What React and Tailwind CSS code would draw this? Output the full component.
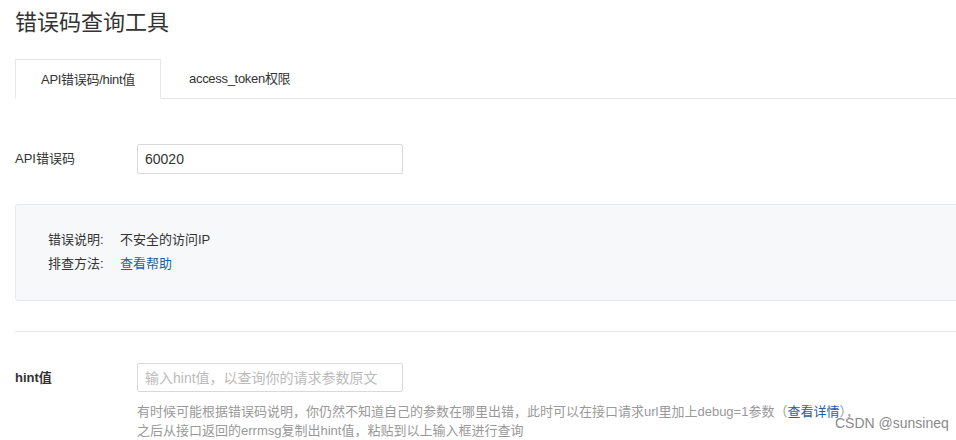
import React from 'react'

const font = { fontFamily: '"Liberation Sans", "Noto Sans CJK SC", sans-serif' }

function Row({ label, bold, children }) {
  return (
    <div className="flex items-start">
      <div className={`w-[122px] h-[30px] leading-[30px] text-[13px] text-[#333] ${bold ? 'font-semibold' : ''}`}>{label}</div>
      <div>{children}</div>
    </div>
  )
}

export default function App() {
  return (
    <div className="relative w-[956px] h-[440px] overflow-hidden bg-white" style={font}>
      <div className="w-[1000px] pl-[15px]">
        <h1 className="mt-2 text-[22px] leading-[30px] text-[#333]">错误码查询工具</h1>

        <div className="mt-[21px] flex border-b border-[#e5e5e5]">
          <div className="-mb-px w-[146px] h-10 text-center leading-[39px] text-[13px] tracking-[-0.3px] text-[#333] bg-white border border-[#e5e5e5] border-b-white">
            API错误码/hint值
          </div>
          <div className="h-[39px] px-7 leading-[39px] text-[13px] tracking-[-0.3px] text-[#333]">access_token权限</div>
        </div>

        <div className="mt-[45px]">
          <Row label="API错误码">
            <input
              defaultValue="60020"
              className="w-[266px] h-[30px] px-[7px] text-[14px] text-[#333] border border-[#d9d9d9] rounded-[2px] outline-none"
              style={font}
            />
          </Row>
        </div>

        <div className="mt-[30px] h-[97px] py-[23px] px-8 bg-[#f7f8fa] border border-[#e8e8e8] rounded-[3px] text-[13px] leading-6 text-[#333]">
          <div className="flex">
            <span className="w-[72px]">错误说明:</span>
            <span>不安全的访问IP</span>
          </div>
          <div className="flex">
            <span className="w-[72px]">排查方法:</span>
            <a className="text-[#1f5fa6]">查看帮助</a>
          </div>
        </div>

        <div className="mt-[30px] border-t border-[#e8e8e8]" />

        <div className="mt-[31px]">
          <Row label="hint值" bold>
            <input
              placeholder="输入hint值，以查询你的请求参数原文"
              className="w-[266px] h-[29px] px-[7px] text-[14px] text-[#333] placeholder:text-[#bbb] border border-[#d9d9d9] rounded-[2px] outline-none"
              style={font}
            />
            <p className="mt-[10px] text-[13px] leading-[19px] text-[#999] whitespace-nowrap">
              有时候可能根据错误码说明，你仍然不知道自己的参数在哪里出错，此时可以在接口请求url里加上debug=1参数（<a className="text-[#1f5fa6]">查看详情</a>），
              <br />
              之后从接口返回的errmsg复制出hint值，粘贴到以上输入框进行查询
            </p>
          </Row>
        </div>
      </div>

      <div className="absolute left-[835px] top-[413px] text-[14px] leading-5 text-[#8a8a8a]">CSDN @sunsineq</div>
    </div>
  )
}
